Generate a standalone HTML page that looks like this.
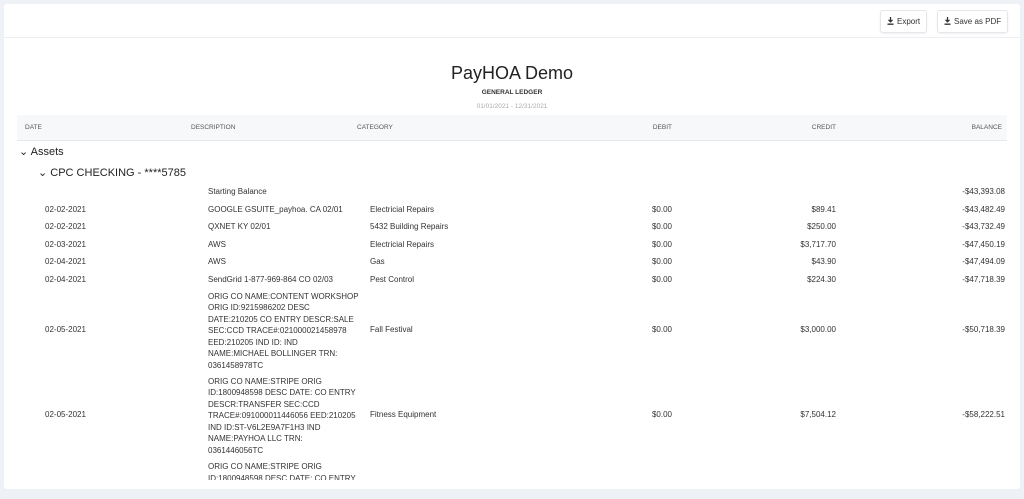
<!DOCTYPE html>
<html><head><style>
body{margin:0;width:1024px;height:499px;background:#eef1f5;font-family:"Liberation Sans",sans-serif;color:#333;overflow:hidden;position:relative}
.card{position:absolute;left:4px;top:4px;width:1016px;height:485px;background:#fff;border-radius:3px}
.tb{position:absolute;left:0;top:0;width:100%;height:33px;border-bottom:1px solid #eceef1}
.btn{position:absolute;top:6px;height:21px;border:1px solid #e3e6ea;border-radius:3px;font-size:8px;line-height:21px;padding:0 6px;box-shadow:0 1px 2px rgba(0,0,0,.06);color:#333}
.btn svg{vertical-align:-1px;margin-right:3px}
.t{position:absolute;font-size:8px;white-space:nowrap}
.r{text-align:right}
.hd{position:absolute;left:13px;top:111px;width:990px;height:25px;background:#f7f8fa;border-bottom:1px solid #e6e8eb}
.h{position:absolute;top:120px;font-size:6.5px;color:#555}
.clip{position:absolute;left:0;top:183px;width:1016px;height:293px;overflow:hidden}
</style></head><body>
<div class="card">
<div class="tb"></div>
<div class="btn" style="left:876px"><svg width="7" height="8" viewBox="0 0 7 8"><path d="M3.5 0v4.5M1.5 2.8l2 2 2-2M0.5 7.2h6" stroke="#333" stroke-width="1.3" fill="none"/></svg>Export</div>
<div class="btn" style="left:933px"><svg width="7" height="8" viewBox="0 0 7 8"><path d="M3.5 0v4.5M1.5 2.8l2 2 2-2M0.5 7.2h6" stroke="#333" stroke-width="1.3" fill="none"/></svg>Save as PDF</div>
<div class="t" style="left:0;width:1016px;text-align:center;top:59px;font-size:18px;color:#222">PayHOA Demo</div>
<div class="t" style="left:0;width:1016px;text-align:center;top:85px;font-size:6.5px;font-weight:bold">GENERAL LEDGER</div>
<div class="t" style="left:0;width:1016px;text-align:center;top:99px;font-size:6.5px;color:#aaa">01/01/2021 - 12/31/2021</div>
<div class="hd"></div>
<div class="h" style="left:21px">DATE</div>
<div class="h" style="left:187px">DESCRIPTION</div>
<div class="h" style="left:353px">CATEGORY</div>
<div class="h r" style="left:600px;width:68px">DEBIT</div>
<div class="h r" style="left:760px;width:72px">CREDIT</div>
<div class="h r" style="left:920px;width:78px">BALANCE</div>
<div class="t" style="left:15px;top:141px;font-size:11px;color:#222">⌄ Assets</div>
<div class="t" style="left:34px;top:162px;font-size:11px;color:#222">⌄ CPC CHECKING - ****5785</div>
<div class="clip">
<div class="t" style="left:204px;top:0">Starting Balance</div><div class="t r" style="left:900px;width:101px;top:0">-$43,393.08</div>
<div style="position:absolute;left:0;top:18px;width:100%">
<div class="t" style="left:41px;top:0">02-02-2021</div><div class="t" style="left:204px;top:0">GOOGLE GSUITE_payhoa. CA 02/01</div><div class="t" style="left:366px;top:0">Electricial Repairs</div><div class="t r" style="left:600px;width:68px;top:0">$0.00</div><div class="t r" style="left:760px;width:72px;top:0">$89.41</div><div class="t r" style="left:900px;width:101px;top:0">-$43,482.49</div>
<div class="t" style="left:41px;top:17.4px">02-02-2021</div><div class="t" style="left:204px;top:17.4px">QXNET KY 02/01</div><div class="t" style="left:366px;top:17.4px">5432 Building Repairs</div><div class="t r" style="left:600px;width:68px;top:17.4px">$0.00</div><div class="t r" style="left:760px;width:72px;top:17.4px">$250.00</div><div class="t r" style="left:900px;width:101px;top:17.4px">-$43,732.49</div>
<div class="t" style="left:41px;top:34.8px">02-03-2021</div><div class="t" style="left:204px;top:34.8px">AWS</div><div class="t" style="left:366px;top:34.8px">Electricial Repairs</div><div class="t r" style="left:600px;width:68px;top:34.8px">$0.00</div><div class="t r" style="left:760px;width:72px;top:34.8px">$3,717.70</div><div class="t r" style="left:900px;width:101px;top:34.8px">-$47,450.19</div>
<div class="t" style="left:41px;top:52.2px">02-04-2021</div><div class="t" style="left:204px;top:52.2px">AWS</div><div class="t" style="left:366px;top:52.2px">Gas</div><div class="t r" style="left:600px;width:68px;top:52.2px">$0.00</div><div class="t r" style="left:760px;width:72px;top:52.2px">$43.90</div><div class="t r" style="left:900px;width:101px;top:52.2px">-$47,494.09</div>
<div class="t" style="left:41px;top:69.6px">02-04-2021</div><div class="t" style="left:204px;top:69.6px">SendGrid 1-877-969-864 CO 02/03</div><div class="t" style="left:366px;top:69.6px">Pest Control</div><div class="t r" style="left:600px;width:68px;top:69.6px">$0.00</div><div class="t r" style="left:760px;width:72px;top:69.6px">$224.30</div><div class="t r" style="left:900px;width:101px;top:69.6px">-$47,718.39</div>
</div>
<div class="t" style="left:204px;top:103.5px;line-height:11.5px">ORIG CO NAME:CONTENT WORKSHOP<br>ORIG ID:9215986202 DESC<br>DATE:210205 CO ENTRY DESCR:SALE<br>SEC:CCD TRACE#:021000021458978<br>EED:210205 IND ID: IND<br>NAME:MICHAEL BOLLINGER TRN:<br>0361458978TC</div>
<div class="t" style="left:41px;top:138px">02-05-2021</div><div class="t" style="left:366px;top:138px">Fall Festival</div><div class="t r" style="left:600px;width:68px;top:138px">$0.00</div><div class="t r" style="left:760px;width:72px;top:138px">$3,000.00</div><div class="t r" style="left:900px;width:101px;top:138px">-$50,718.39</div>
<div class="t" style="left:204px;top:188.5px;line-height:11.5px">ORIG CO NAME:STRIPE ORIG<br>ID:1800948598 DESC DATE: CO ENTRY<br>DESCR:TRANSFER SEC:CCD<br>TRACE#:091000011446056 EED:210205<br>IND ID:ST-V6L2E9A7F1H3 IND<br>NAME:PAYHOA LLC TRN:<br>0361446056TC</div>
<div class="t" style="left:41px;top:223px">02-05-2021</div><div class="t" style="left:366px;top:223px">Fitness Equipment</div><div class="t r" style="left:600px;width:68px;top:223px">$0.00</div><div class="t r" style="left:760px;width:72px;top:223px">$7,504.12</div><div class="t r" style="left:900px;width:101px;top:223px">-$58,222.51</div>
<div class="t" style="left:204px;top:274px;line-height:11.5px">ORIG CO NAME:STRIPE ORIG<br>ID:1800948598 DESC DATE: CO ENTRY</div>
</div>
</div>
</body></html>
